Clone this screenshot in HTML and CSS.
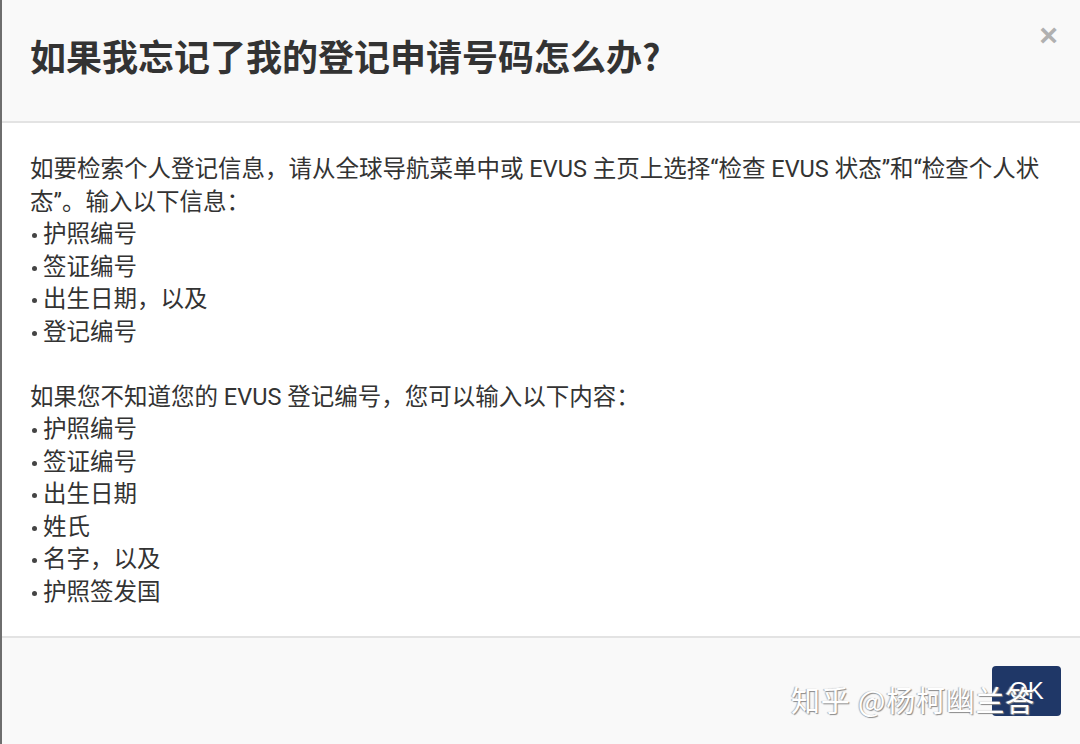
FILE: index.html
```html
<!DOCTYPE html>
<html lang="zh-CN">
<head>
<meta charset="utf-8">
<title>EVUS</title>
<link rel="stylesheet" href="styles.css">
</head>
<body>
<div class="modal">
  <div class="modal-header">
    <h1 class="modal-title">如果我忘记了我的登记申请号码怎么办?</h1>
    <span class="close">×</span>
  </div>
  <div class="modal-body">
    <p class="para">如要检索个人登记信息，请从全球导航菜单中或 EVUS 主页上选择“检查 EVUS 状态”和“检查个人状态”。输入以下信息：</p>
    <ul class="list">
      <li>护照编号</li>
      <li>签证编号</li>
      <li>出生日期，以及</li>
      <li>登记编号</li>
    </ul>
    <p class="para gap">如果您不知道您的 EVUS 登记编号，您可以输入以下内容：</p>
    <ul class="list">
      <li>护照编号</li>
      <li>签证编号</li>
      <li>出生日期</li>
      <li>姓氏</li>
      <li>名字，以及</li>
      <li>护照签发国</li>
    </ul>
  </div>
  <div class="modal-footer">
    <button class="btn">OK</button>
    <div class="watermark">知乎 @杨柯幽兰答</div>
  </div>
</div>
</body>
</html>
```
FILE: styles.css
```css
html, body {
  margin: 0;
  padding: 0;
  background: #ffffff;
}
body {
  font-family: "Roboto", "Liberation Sans", "Noto Sans CJK SC", sans-serif;
  color: #333333;
}
.modal {
  width: 1080px;
  height: 744px;
  box-sizing: border-box;
  border-left: 2px solid #6e6e6e;
  display: flex;
  flex-direction: column;
  overflow: hidden;
}
.modal-header {
  position: relative;
  height: 123px;
  box-sizing: border-box;
  background: #f9f9f9;
  border-bottom: 2px solid #e3e3e3;
  display: flex;
  align-items: center;
  padding: 0 28px 12px;
}
.modal-title {
  margin: 0;
  font-family: "Noto Sans CJK SC", sans-serif;
  font-size: 36px;
  line-height: 44px;
  font-weight: 700;
  color: #333333;
  letter-spacing: 0;
}
.close {
  position: absolute;
  right: 22px;
  top: 19px;
  font-family: "Liberation Sans", sans-serif;
  font-size: 32px;
  font-weight: 700;
  color: #b0b0b0;
  line-height: 1;
}
.modal-body {
  flex: 1;
  background: #ffffff;
  padding: 30px 36px 0 28px;
  font-size: 23.5px;
  line-height: 32.5px;
  font-family: "Roboto", "Noto Sans CJK SC", sans-serif;
  color: #333333;
}
.para {
  margin: 0;
}
.para.gap {
  margin-top: 32.5px;
}
.list {
  margin: 0;
  padding: 0;
  list-style: none;
}
.list li {
  height: 32.5px;
}
.list li::before {
  content: "";
  display: inline-block;
  width: 5px;
  height: 5px;
  border-radius: 50%;
  background: #444444;
  margin: 0 6px 0 2px;
  vertical-align: middle;
}
.modal-footer {
  position: relative;
  height: 108px;
  box-sizing: border-box;
  background: #f9f9f9;
  border-top: 2px solid #e3e3e3;
  display: flex;
  justify-content: flex-end;
  align-items: flex-start;
  padding: 28px 19px 0 0;
}
.btn {
  width: 69px;
  height: 50px;
  background: #1f3767;
  border: none;
  border-radius: 4px;
  color: #ffffff;
  font-family: "Liberation Sans", sans-serif;
  font-size: 24px;
}
.watermark {
  position: absolute;
  left: 789px;
  top: 40px;
  font-family: "Noto Sans CJK SC", sans-serif;
  font-size: 29px;
  color: #ffffff;
  letter-spacing: 0.8px;
  white-space: nowrap;
  text-shadow: 1px 1px 1px #8a8a8a, -1px 0 1px #b0b0b0;
}
```
